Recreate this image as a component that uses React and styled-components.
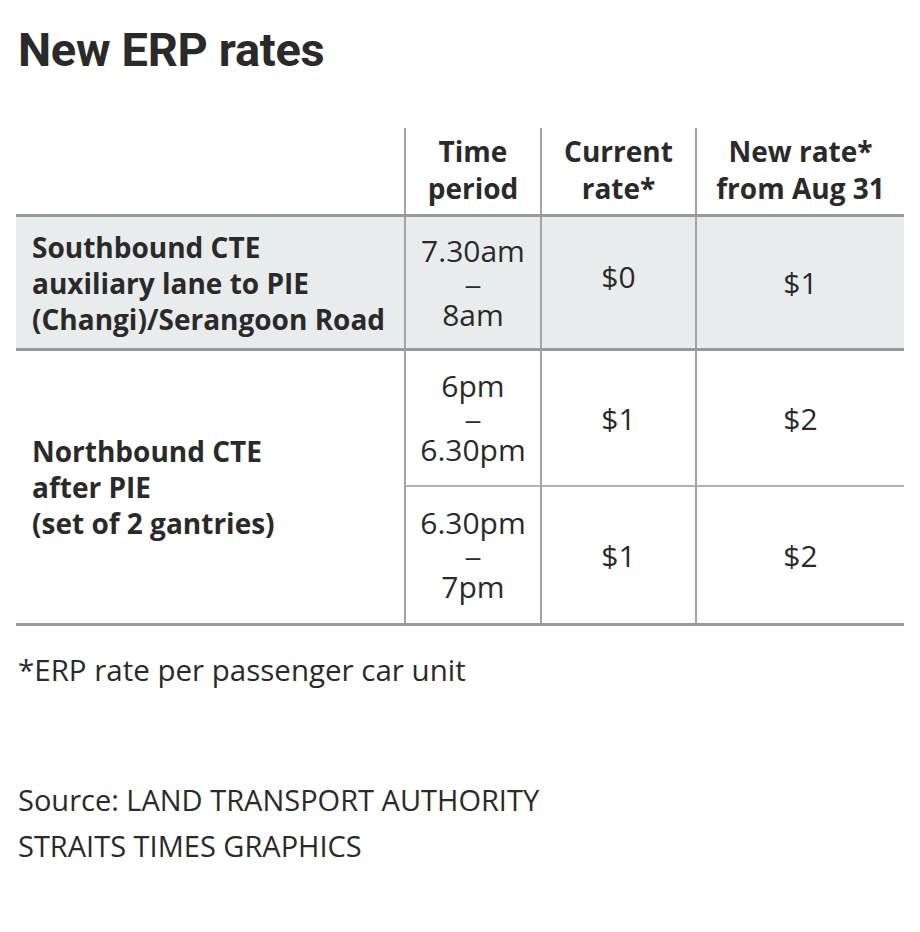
import React from "react";
import styled, { createGlobalStyle } from "styled-components";

const GlobalStyle = createGlobalStyle`
  body {
    margin: 0;
    background: #ffffff;
    font-family: "Open Sans", "Liberation Sans", sans-serif;
    color: #2a2a2a;
  }
`;

const Page = styled.div`
  width: 920px;
  padding: 22px 16px 0 16px;
  box-sizing: border-box;
`;

const Title = styled.h1`
  margin: 0 0 0 2px;
  font-family: Roboto, "Liberation Sans", sans-serif;
  font-size: 47px;
  line-height: 56px;
  font-weight: 700;
  letter-spacing: -0.3px;
`;

const Table = styled.table`
  margin-top: 50px;
  width: 888px;
  border-collapse: collapse;
  table-layout: fixed;
`;

const Head = styled.th`
  height: 84px;
  padding: 0 0 2px 0;
  font-size: 28px;
  font-weight: 700;
  text-align: center;
  vertical-align: middle;
  border-left: ${(p) => (p.$first ? "none" : "2px solid #a3a3a3")};
  border-bottom: 3px solid #999999;
`;

const Row = styled.tr`
  background: ${(p) => (p.$shaded ? "#e9eced" : "transparent")};
  border-bottom: ${(p) => (p.$thin ? "2px solid #b3b3b3" : "3px solid #999999")};
`;

const Place = styled.td`
  padding: 0 0 0 16px;
  font-size: 28px;
  font-weight: 700;
  text-align: left;
  vertical-align: middle;
  border-bottom: ${(p) => (p.$closing ? "3px solid #999999" : "none")};
`;

const Time = styled.td`
  height: ${(p) => p.$h || 134}px;
  padding: 0;
  font-size: 30px;
  font-weight: 400;
  text-align: center;
  vertical-align: middle;
  border-left: 2px solid #a3a3a3;
`;

const Rate = styled.td`
  padding: 0;
  font-size: 30px;
  font-weight: 400;
  text-align: center;
  vertical-align: middle;
  border-left: 2px solid #a3a3a3;
  padding-bottom: ${(p) => (p.$raise ? "12px" : "0")};
`;

const Line = styled.div`
  height: ${(p) => p.$h}px;
  line-height: ${(p) => p.$h}px;
  white-space: nowrap;
`;

const Dash = styled.div`
  height: 32px;
  line-height: 32px;
  padding-top: 2px;
  box-sizing: border-box;
  font-size: 16px;
  font-weight: 700;
`;

const Note = styled.p`
  margin: 24px 0 0 2px;
  font-size: 29.5px;
  line-height: 40px;
`;

const Source = styled.p`
  margin: 87px 0 0 2px;
  font-size: 29px;
  line-height: 46px;
`;

const Lines = ({ items, h }) =>
  items.map((t, i) => (
    <Line key={i} $h={h}>
      {t}
    </Line>
  ));

const Period = ({ from, to }) => (
  <>
    <Line $h={32}>{from}</Line>
    <Dash>—</Dash>
    <Line $h={32}>{to}</Line>
  </>
);

export default function App() {
  return (
    <Page>
      <GlobalStyle />
      <Title>New ERP rates</Title>
      <Table>
        <colgroup>
          <col style={{ width: "389px" }} />
          <col style={{ width: "136px" }} />
          <col style={{ width: "155px" }} />
          <col style={{ width: "208px" }} />
        </colgroup>
        <thead>
          <tr>
            <Head $first />
            <Head>
              <Lines h={37} items={["Time", "period"]} />
            </Head>
            <Head>
              <Lines h={37} items={["Current", "rate*"]} />
            </Head>
            <Head>
              <Lines h={37} items={["New rate*", "from Aug 31"]} />
            </Head>
          </tr>
        </thead>
        <tbody>
          <Row $shaded>
            <Place>
              <Lines
                h={36}
                items={["Southbound CTE", "auxiliary lane to PIE", "(Changi)/Serangoon Road"]}
              />
            </Place>
            <Time $h={131}>
              <Period from="7.30am" to="8am" />
            </Time>
            <Rate $raise>$0</Rate>
            <Rate>$1</Rate>
          </Row>
          <Row $thin>
            <Place rowSpan={2} $closing>
              <Lines h={36} items={["Northbound CTE", "after PIE", "(set of 2 gantries)"]} />
            </Place>
            <Time>
              <Period from="6pm" to="6.30pm" />
            </Time>
            <Rate>$1</Rate>
            <Rate>$2</Rate>
          </Row>
          <Row>
            <Time $h={136}>
              <Period from="6.30pm" to="7pm" />
            </Time>
            <Rate>$1</Rate>
            <Rate>$2</Rate>
          </Row>
        </tbody>
      </Table>
      <Note>*ERP rate per passenger car unit</Note>
      <Source>
        Source: LAND TRANSPORT AUTHORITY
        <br />
        STRAITS TIMES GRAPHICS
      </Source>
    </Page>
  );
}
